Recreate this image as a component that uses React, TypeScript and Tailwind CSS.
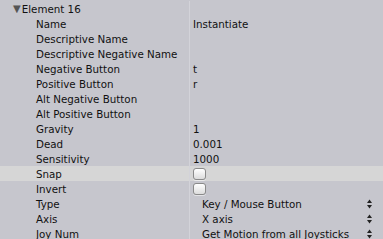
import React from 'react';

type Row = { label: string; value?: string; kind?: 'text' | 'check' | 'select'; highlight?: boolean };

const ROWS: Row[] = [
  { label: 'Name', value: 'Instantiate' },
  { label: 'Descriptive Name' },
  { label: 'Descriptive Negative Name' },
  { label: 'Negative Button', value: 't' },
  { label: 'Positive Button', value: 'r' },
  { label: 'Alt Negative Button' },
  { label: 'Alt Positive Button' },
  { label: 'Gravity', value: '1' },
  { label: 'Dead', value: '0.001' },
  { label: 'Sensitivity', value: '1000' },
  { label: 'Snap', kind: 'check', highlight: true },
  { label: 'Invert', kind: 'check' },
  { label: 'Type', value: 'Key / Mouse Button', kind: 'select' },
  { label: 'Axis', value: 'X axis', kind: 'select' },
  { label: 'Joy Num', value: 'Get Motion from all Joysticks', kind: 'select' },
];

function Checkbox() {
  return (
    <span className="block w-[13px] h-[12px] rounded-[3px] border border-[#8a8a8a] bg-gradient-to-b from-[#ffffff] to-[#dcdcdc] shadow-[0_1px_0_rgba(255,255,255,0.5)]" />
  );
}

function Stepper() {
  return (
    <svg width="5" height="10" viewBox="0 0 5 10" className="text-[#222]">
      <path d="M2.5 0.5 L5 4 L0 4 Z" fill="currentColor" />
      <path d="M0 6 L5 6 L2.5 9.5 Z" fill="currentColor" />
    </svg>
  );
}

export default function App() {
  return (
    <div className="w-[383px] h-[239px] overflow-hidden bg-[#c6c6cd] text-[10.3px] leading-none text-[#111] pt-[1px]" style={{ fontFamily: '"DejaVu Sans", "Liberation Sans", sans-serif' }}>
      <div className="flex h-[15px]">
        <div className="w-[189px] flex items-center pl-[13px] pt-[1px]">
          <span className="text-[#555] text-[10px] mr-[1px]">▼</span>
          <span>Element 16</span>
        </div>
        <div className="flex-1 border-l border-[#d3d3d9]" />
      </div>
      {ROWS.map((r) => (
        <div key={r.label} className={`flex h-[15px] ${r.highlight ? 'bg-[#d6d6d6]' : ''}`}>
          <div className="w-[189px] flex items-center pl-[36px] pt-[1px]">{r.label}</div>
          <div className="flex-1 border-l border-[#d3d3d9] flex items-center pl-[3px] pr-[11px]">
            {r.kind === 'check' ? (
              <Checkbox />
            ) : r.kind === 'select' ? (
              <div className="flex-1 flex items-center justify-between pl-[9px] pt-[1px]">
                <span>{r.value}</span>
                <Stepper />
              </div>
            ) : (
              <span className="pt-[1px]">{r.value}</span>
            )}
          </div>
        </div>
      ))}
    </div>
  );
}
